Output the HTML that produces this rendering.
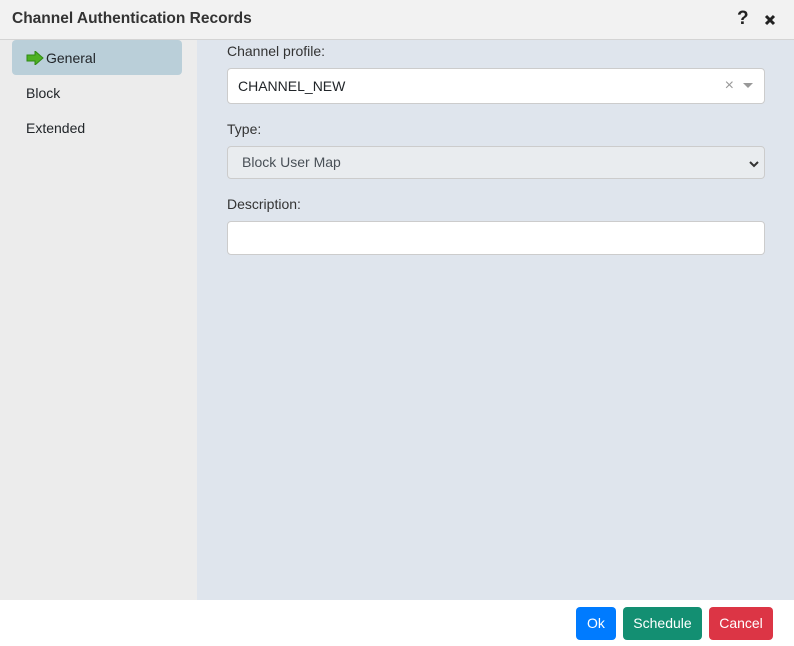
<!DOCTYPE html><html><head><style>
*{box-sizing:border-box;margin:0;padding:0}
body{width:794px;height:646px;font-family:"Liberation Sans",sans-serif;font-size:14px;color:#212529;background:#fff;position:relative;overflow:hidden}
.hdr{position:absolute;left:0;top:0;width:794px;height:40px;background:#f2f2f2;border-bottom:1px solid #d4d4d4}
.hdr .t{position:absolute;left:12px;top:10px;font-weight:bold;font-size:15.5px;color:#333}
.side{position:absolute;left:0;top:40px;width:197px;height:560px;background:#ececec}
.main{position:absolute;left:197px;top:40px;width:597px;height:560px;background:#dfe5ed}
.nav{position:absolute;left:12px;width:170px;height:35px;padding:10px 0 0 14px;color:#212529}
.sel{background:#bacfd9;border-radius:4px}
.lbl{position:absolute;left:227px;color:#333}
.box{position:absolute;left:227px;width:538px;border:1px solid #ccc;border-radius:4px;background:#fff;padding-left:10px}
.btn{position:absolute;top:607px;height:33px;color:#fff;border-radius:4px;text-align:center;line-height:33px;font-size:14px}
</style></head><body>
<div class="hdr"><div class="t">Channel Authentication Records</div>
<div style="position:absolute;left:737px;top:8px;font-weight:bold;font-size:19px;color:#222">?</div>
<svg width="12" height="12" viewBox="0 0 12 12" style="position:absolute;left:764px;top:14px"><path d="M2 2l8 8M10 2l-8 8" stroke="#222" stroke-width="3"/></svg></div>
<div class="side"></div><div class="main"></div>
<div class="nav sel" style="top:40px"><svg width="18" height="14" style="position:absolute;left:14px;top:11px" viewBox="0 0 18 14"><path d="M1 4h8V0l8 7-8 7v-4H1z" fill="#4db022" stroke="#2f8a14" stroke-width="1"/></svg><span style="margin-left:20px">General</span></div>
<div class="nav" style="top:75px">Block</div>
<div class="nav" style="top:110px">Extended</div>
<div class="lbl" style="top:43px">Channel profile:</div>
<div class="box" style="top:68px;height:36px;line-height:34px">CHANNEL_NEW<span style="position:absolute;right:30px;color:#999;font-size:16px">×</span><span style="position:absolute;right:11px;top:14px;width:0;height:0;border:5px solid transparent;border-top:5px solid #999"></span></div>
<div class="lbl" style="top:121px">Type:</div>
<div class="box" style="top:146px;height:33px;line-height:31px;background:#e9ecef;padding-left:14px;color:#495057">Block User Map<svg width="12" height="8" style="position:absolute;right:4px;top:13px" viewBox="0 0 12 8"><path d="M2 2l4 4 4-4" stroke="#333" stroke-width="2" fill="none"/></svg></div>
<div class="lbl" style="top:196px">Description:</div>
<div class="box" style="top:221px;height:34px"></div>
<div class="btn" style="left:576px;width:40px;background:#007bff">Ok</div>
<div class="btn" style="left:623px;width:79px;background:#138f72">Schedule</div>
<div class="btn" style="left:709px;width:64px;background:#dc3545">Cancel</div>
</body></html>
